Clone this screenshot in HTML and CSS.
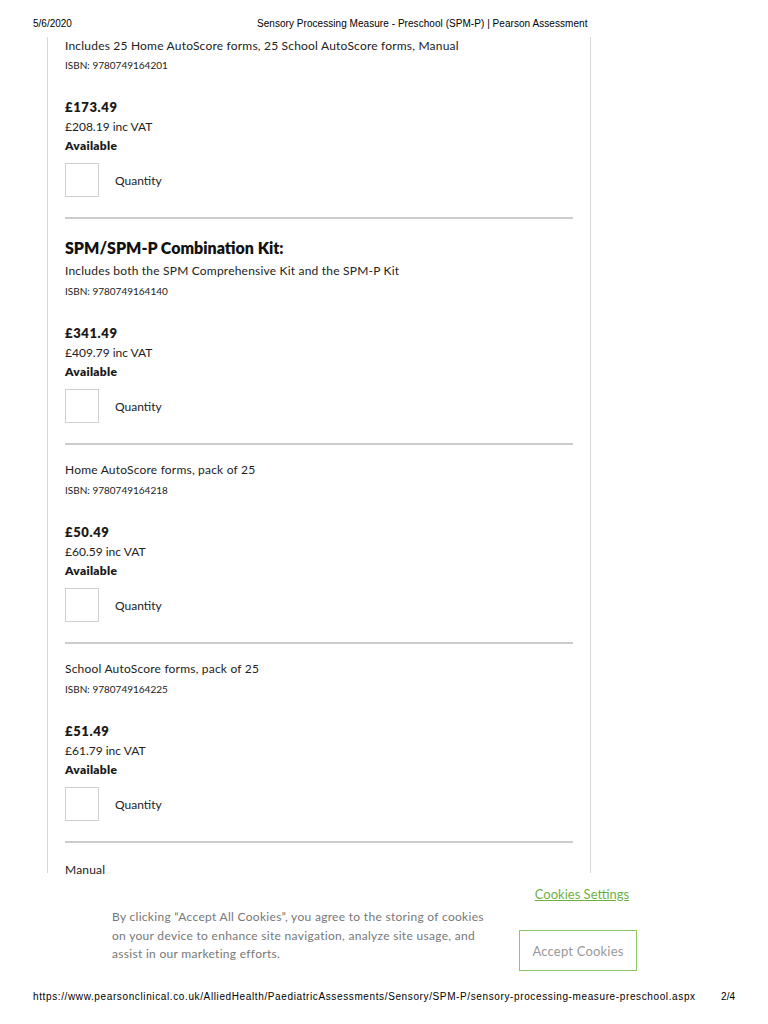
FILE: index.html
```html
<!DOCTYPE html>
<html lang="en">
<head>
    <meta charset="UTF-8">
    <meta name="viewport" content="width=device-width, initial-scale=1.0">
    <title>Sensory Processing Measure - Preschool (SPM-P) | Pearson Assessment</title>
    <link rel="stylesheet" href="styles.css">
</head>
<body>
    <header class="print-header">
        <span class="print-date">5/6/2020</span>
        <span class="print-title">Sensory Processing Measure - Preschool (SPM-P) | Pearson Assessment</span>
    </header>

    <main class="sheet">
        <!-- continued from previous page -->
        <div class="product product-first">
            <p class="desc">Includes 25 Home AutoScore forms, 25 School AutoScore forms, Manual</p>
            <p class="isbn">ISBN: 9780749164201</p>
            <p class="price">£173.49</p>
            <p class="vat">£208.19 inc VAT</p>
            <p class="stock">Available</p>
            <div class="qty">
                <input type="text" class="qty-input" aria-label="Quantity">
                <span>Quantity</span>
            </div>
        </div>

        <div class="product">
            <h2>SPM/SPM-P Combination Kit:</h2>
            <p class="desc">Includes both the SPM Comprehensive Kit and the SPM-P Kit</p>
            <p class="isbn">ISBN: 9780749164140</p>
            <p class="price">£341.49</p>
            <p class="vat">£409.79 inc VAT</p>
            <p class="stock">Available</p>
            <div class="qty">
                <input type="text" class="qty-input" aria-label="Quantity">
                <span>Quantity</span>
            </div>
        </div>

        <div class="product">
            <p class="desc">Home AutoScore forms, pack of 25</p>
            <p class="isbn">ISBN: 9780749164218</p>
            <p class="price">£50.49</p>
            <p class="vat">£60.59 inc VAT</p>
            <p class="stock">Available</p>
            <div class="qty">
                <input type="text" class="qty-input" aria-label="Quantity">
                <span>Quantity</span>
            </div>
        </div>

        <div class="product">
            <p class="desc">School AutoScore forms, pack of 25</p>
            <p class="isbn">ISBN: 9780749164225</p>
            <p class="price">£51.49</p>
            <p class="vat">£61.79 inc VAT</p>
            <p class="stock">Available</p>
            <div class="qty">
                <input type="text" class="qty-input" aria-label="Quantity">
                <span>Quantity</span>
            </div>
        </div>

        <div class="product product-last">
            <p class="desc">Manual</p>
        </div>
    </main>

    <div class="cookie-banner">
        <p class="cookie-text">By clicking “Accept All Cookies”, you agree to the storing of cookies on your device to enhance site navigation, analyze site usage, and assist in our marketing efforts.</p>
        <div class="cookie-actions">
            <a href="#" class="cookie-settings">Cookies Settings</a>
            <button class="cookie-accept">Accept Cookies</button>
        </div>
    </div>

    <footer class="print-footer">
        <span class="print-url">https://www.pearsonclinical.co.uk/AlliedHealth/PaediatricAssessments/Sensory/SPM-P/sensory-processing-measure-preschool.aspx</span>
        <span>2/4</span>
    </footer>
</body>
</html>
```

FILE: styles.css
```css
body {
    margin: 0;
    width: 768px;
    height: 1024px;
    background-color: white;
    font-family: Lato, "Open Sans", sans-serif;
    color: #1a1a1a;
    overflow: hidden;
}
p, h2 {
    margin: 0;
}
.print-header {
    height: 37px;
    display: flex;
    padding: 18px 0 0 33px;
    box-sizing: border-box;
    font-family: "Liberation Sans", Arial, sans-serif;
    font-size: 10px;
    line-height: 12px;
    color: #000;
}
.print-title {
    margin-left: 185px;
    letter-spacing: 0.05px;
}
.sheet {
    margin-left: 47px;
    width: 544px;
    height: 836px;
    box-sizing: border-box;
    border-left: 1px solid #d6d6d6;
    border-right: 1px solid #d6d6d6;
    padding: 0 17px;
}
.product {
    padding-top: 15px;
    border-bottom: 2px solid #cccccc;
}
.product-first {
    padding-top: 0;
}
.product-last {
    border-bottom: none;
    padding-top: 17px;
}
.product h2 {
    font-size: 16px;
    font-weight: 800;
    line-height: 26px;
    margin-top: 1px;
    color: #111;
}
.desc {
    font-size: 12px;
    line-height: 20px;
    letter-spacing: 0.2px;
    color: #222;
}
.product-first .desc {
    line-height: 18px;
}
.isbn {
    font-size: 10px;
    line-height: 20px;
    color: #222;
}
.price {
    margin-top: 23px;
    font-size: 13px;
    font-weight: 800;
    letter-spacing: 0.6px;
    line-height: 19px;
}
.vat {
    font-size: 12px;
    line-height: 19px;
    color: #222;
}
.stock {
    font-size: 12px;
    font-weight: 800;
    letter-spacing: 0.3px;
    line-height: 19px;
}
.qty {
    display: flex;
    align-items: center;
    gap: 16px;
    margin: 8px 0 20px;
    font-size: 12px;
    color: #222;
}
.qty-input {
    width: 34px;
    height: 34px;
    box-sizing: border-box;
    border: 1px solid #d0d0d0;
    margin: 0;
    padding: 0;
}
.cookie-banner {
    height: 112px;
    display: flex;
    background-color: white;
}
.cookie-text {
    width: 372px;
    margin: 35px 0 0 112px;
    font-size: 12px;
    line-height: 18.5px;
    letter-spacing: 0.3px;
    color: #777777;
}
.cookie-actions {
    margin-left: 35px;
    width: 118px;
    display: flex;
    flex-direction: column;
    align-items: center;
    padding-top: 12px;
}
.cookie-settings {
    font-size: 13px;
    line-height: 18px;
    margin-left: 8px;
    color: #6fb043;
    text-decoration: underline;
}
.cookie-accept {
    margin-top: 27px;
    width: 118px;
    height: 41px;
    background-color: white;
    border: 1px solid #8cc863;
    font-family: Lato, "Open Sans", sans-serif;
    font-size: 13px;
    letter-spacing: 0.2px;
    color: #999999;
}
.print-footer {
    display: flex;
    justify-content: space-between;
    padding: 6px 33px 0 33px;
    font-family: "Liberation Sans", Arial, sans-serif;
    font-size: 10px;
    line-height: 12px;
    color: #000;
}
.print-url {
    letter-spacing: 0.62px;
}
```
